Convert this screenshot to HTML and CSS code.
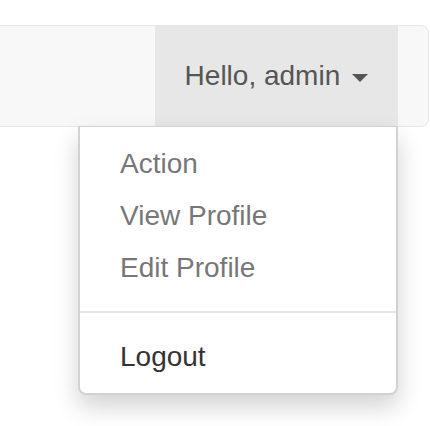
FILE: index.html
```html
<!DOCTYPE html>
<html>
<head>
<meta charset="utf-8">
<link rel="stylesheet" href="styles.css">
</head>
<body>
<div class="page">
  <nav class="navbar">
    <div class="toggle">Hello, admin <span class="caret"></span></div>
  </nav>
  <div class="menu">
    <div class="item muted">Action</div>
    <div class="item muted">View Profile</div>
    <div class="item muted">Edit Profile</div>
    <div class="divider"></div>
    <div class="item">Logout</div>
  </div>
</div>
</body>
</html>
```
FILE: styles.css
```css
html, body {
  margin: 0;
  padding: 0;
  background: #fff;
  font-family: "Liberation Sans", Arial, sans-serif;
  font-size: 28px;
  line-height: 40px;
  color: #333;
}
.page {
  display: flex;
  flex-direction: column;
  padding: 25px 0 32px;
}
.navbar {
  margin: 0 1px 0 -20px;
  height: 100px;
  background: #f8f8f8;
  border: 1px solid #e7e7e7;
  border-radius: 8px;
  display: flex;
  justify-content: flex-end;
}
.toggle {
  padding: 30px;
  margin-right: 30px;
  background: #e7e7e7;
  color: #555;
}
.caret {
  display: inline-block;
  width: 0;
  height: 0;
  margin-left: 4px;
  vertical-align: middle;
  border-top: 8px solid #555;
  border-left: 8px solid rgba(231,231,231,0);
  border-right: 8px solid rgba(231,231,231,0);
}
.menu {
  align-self: flex-end;
  margin: -1px 32px 0 0;
  width: 320px;
  box-sizing: border-box;
  padding: 11px 0 10px;
  background: #fff;
  border: 2px solid #d2d2d2;
  border-top-width: 1px;
  border-radius: 0 0 8px 8px;
  box-shadow: 0 12px 24px rgba(0,0,0,.175);
}
.item {
  padding: 6px 40px;
  color: #333;
  white-space: nowrap;
}
.item.muted {
  color: #777;
}
.divider {
  height: 2px;
  margin: 17px 0 18px;
  background: #e5e5e5;
}
```
